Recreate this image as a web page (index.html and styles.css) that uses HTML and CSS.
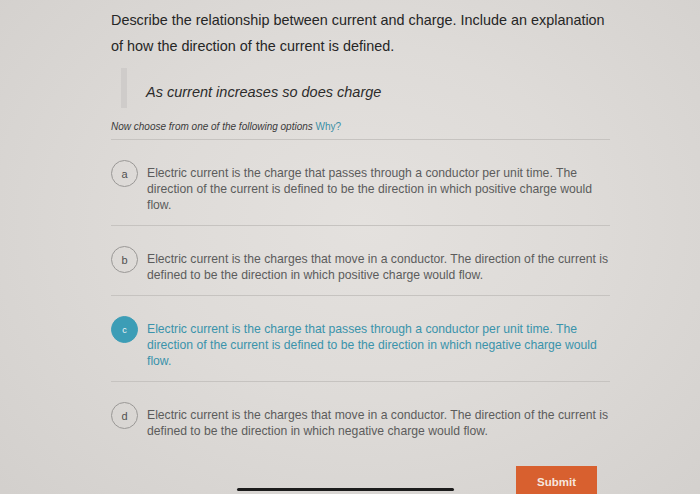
FILE: index.html
```
<!DOCTYPE html>
<html lang="en">
<head>
<meta charset="utf-8">
<title>Question</title>
<link rel="stylesheet" href="styles.css">
</head>
<body>
<main class="page">
  <h1 class="question">Describe the relationship between current and charge. Include an explanation of how the direction of the current is defined.</h1>
  <blockquote class="answer"><span class="answer-bar"></span><span class="answer-text">As current increases so does charge</span></blockquote>
  <p class="prompt"><em>Now choose from one of the following options</em> <span class="why">Why?</span></p>
  <ul class="options">
    <li class="option"><span class="badge">a</span><p class="option-text">Electric current is the charge that passes through a conductor per unit time. The direction of the current is defined to be the direction in which positive charge would flow.</p></li>
    <li class="option"><span class="badge">b</span><p class="option-text">Electric current is the charges that move in a conductor. The direction of the current is defined to be the direction in which positive charge would flow.</p></li>
    <li class="option selected"><span class="badge">c</span><p class="option-text">Electric current is the charge that passes through a conductor per unit time. The direction of the current is defined to be the direction in which negative charge would flow.</p></li>
    <li class="option"><span class="badge">d</span><p class="option-text">Electric current is the charges that move in a conductor. The direction of the current is defined to be the direction in which negative charge would flow.</p></li>
  </ul>
  <div class="actions"><button class="submit" type="button">Submit</button></div>
</main>
<div class="home-bar"></div>
</body>
</html>
```
FILE: styles.css
```
html, body {
  margin: 0;
  padding: 0;
  height: 100%;
}
body {
  width: 700px;
  height: 494px;
  overflow: hidden;
  position: relative;
  font-family: "Liberation Sans", Arial, Helvetica, sans-serif;
  background: radial-gradient(ellipse 70% 80% at 52% 45%, #e4e1de 0%, #dedbd8 45%, #d3d0cd 100%);
  color: #2f2f2f;
}
.page {
  width: 499px;
  padding: 7px 0 0 111px;
}
.question {
  margin: 0;
  font-size: 14.4px;
  font-weight: normal;
  line-height: 26px;
  color: #262626;
  width: 500px;
}
.answer {
  margin: 9px 0 0 10px;
  height: 40px;
  display: flex;
  align-items: center;
  gap: 19px;
}
.answer-bar {
  width: 6px;
  height: 40px;
  background: #cfccca;
}
.answer-text {
  font-style: italic;
  font-size: 14.5px;
  color: #2c2c2c;
  padding-top: 8px;
}
.prompt {
  margin: 12px 0 0;
  font-size: 10px;
  line-height: 14px;
  color: #3a3a3a;
  padding-bottom: 5px;
  border-bottom: 1px solid #c6c3c0;
}
.why {
  color: #3b8fa6;
}
.options {
  list-style: none;
  margin: 0;
  padding: 0;
  width: 499px;
}
.option {
  display: flex;
  align-items: flex-start;
  gap: 9px;
  padding: 20px 0 12px;
  border-bottom: 1px solid #c6c3c0;
}
.option:last-child {
  border-bottom: none;
}
.badge {
  flex: none;
  width: 25px;
  height: 25px;
  border: 1px solid #9a9896;
  border-radius: 50%;
  display: flex;
  align-items: center;
  justify-content: center;
  font-size: 11px;
  color: #505050;
}
.option-text {
  margin: 5px 0 0;
  width: 472px;
  flex: none;
  font-size: 12.2px;
  line-height: 16px;
  color: #5c5c5c;
}
.selected .badge {
  background: #3c9db6;
  border-color: #3c9db6;
  color: #f2f6f7;
  font-size: 9px;
}
.selected .option-text {
  color: #3a93ab;
}
.actions {
  display: flex;
  justify-content: flex-end;
  padding-right: 13px;
  margin-top: 15px;
}
.submit {
  width: 81px;
  height: 32px;
  border: none;
  background: #d8602f;
  color: #f6e6de;
  font-family: "Liberation Sans", Arial, sans-serif;
  font-weight: bold;
  font-size: 11.5px;
  padding: 0;
}
.home-bar {
  position: absolute;
  left: 237px;
  bottom: 3px;
  width: 217px;
  height: 3px;
  border-radius: 2px;
  background: #1c1c1c;
}
```
